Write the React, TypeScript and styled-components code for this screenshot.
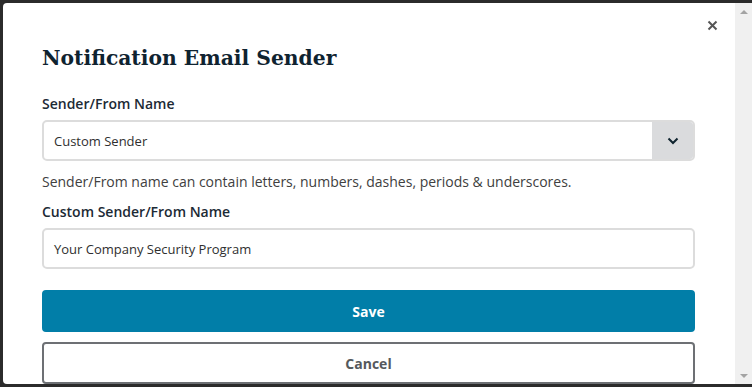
import styled, { createGlobalStyle } from 'styled-components';

const GlobalStyle = createGlobalStyle`
  html, body {
    margin: 0;
    padding: 0;
    background: #2b2b2b;
  }
  * {
    box-sizing: border-box;
  }
`;

const Backdrop = styled.div`
  width: 752px;
  height: 387px;
  padding: 3px 0 3px 3px;
  display: flex;
  background: #2b2b2b;
  overflow: hidden;
`;

const Modal = styled.div`
  position: relative;
  flex: 1;
  display: flex;
  background: #ffffff;
  border-radius: 4px 0 0 4px;
  overflow: hidden;
  font-family: 'Open Sans', 'Noto Sans', sans-serif;
`;

const Content = styled.div`
  flex: 1;
  padding: 40px 40px 0 39px;
  display: flex;
  flex-direction: column;
`;

const CloseButton = styled.button`
  position: absolute;
  top: 14px;
  right: 32px;
  border: none;
  background: none;
  padding: 0;
  width: 16px;
  height: 16px;
  display: flex;
  align-items: center;
  justify-content: center;
  cursor: pointer;
`;

const Title = styled.h2`
  margin: 0 0 22px;
  font-family: 'DejaVu Serif', 'Liberation Serif', serif;
  font-weight: 700;
  font-size: 20.3px;
  line-height: 30px;
  color: #0f2330;
`;

const Label = styled.label`
  display: block;
  font-size: 14px;
  font-weight: 600;
  line-height: 18px;
  color: #1c2a35;
  margin-bottom: 7px;
`;

const SelectBox = styled.div`
  display: flex;
  height: 42px;
  border: 2px solid #dcdcdc;
  border-radius: 5px;
  overflow: hidden;
`;

const SelectValue = styled.div`
  flex: 1;
  display: flex;
  align-items: center;
  padding-left: 10px;
  font-size: 13px;
  color: #2f2f2f;
`;

const Chevron = styled.div`
  width: 41px;
  display: flex;
  align-items: center;
  justify-content: center;
  background: #dadbdd;
`;

const Help = styled.p`
  margin: 11px 0 11px;
  font-size: 14px;
  line-height: 20px;
  color: #404040;
`;

const TextInput = styled.div`
  height: 42px;
  display: flex;
  align-items: center;
  padding-left: 10px;
  border: 2px solid #dcdcdc;
  border-radius: 5px;
  font-size: 13px;
  color: #2f2f2f;
`;

const Button = styled.button<{ $primary?: boolean }>`
  height: 42px;
  width: 100%;
  flex-shrink: 0;
  border-radius: 4px;
  font-family: 'Open Sans', 'Noto Sans', sans-serif;
  font-size: 14px;
  font-weight: 700;
  cursor: pointer;
  background: ${(p) => (p.$primary ? '#017ea8' : '#ffffff')};
  color: ${(p) => (p.$primary ? '#ffffff' : '#55595d')};
  border: 2px solid ${(p) => (p.$primary ? '#017ea8' : '#6d7074')};
  margin-top: ${(p) => (p.$primary ? '21px' : '10px')};
`;

const Scrollbar = styled.div`
  width: 17px;
  background: #f0f0f0;
  display: flex;
  flex-direction: column;
  justify-content: space-between;
  align-items: center;
  padding: 7px 0 6px;
`;

const Arrow = styled.div<{ $down?: boolean }>`
  width: 0;
  height: 0;
  border-left: 4px solid transparent;
  border-right: 4px solid transparent;
  ${(p) =>
    p.$down
      ? 'border-top: 4px solid #a3a3a3;'
      : 'border-bottom: 4px solid #a3a3a3;'}
`;

export default function App() {
  return (
    <>
      <GlobalStyle />
      <Backdrop>
        <Modal>
          <CloseButton aria-label='Close'>
            <svg width='11' height='11' viewBox='0 0 11 11'>
              <path d='M1.5 1.5 L9.5 9.5 M9.5 1.5 L1.5 9.5' stroke='#555' strokeWidth='2' />
            </svg>
          </CloseButton>
          <Content>
            <Title>Notification Email Sender</Title>
            <Label>Sender/From Name</Label>
            <SelectBox>
              <SelectValue>Custom Sender</SelectValue>
              <Chevron>
                <svg width='12' height='8' viewBox='0 0 12 8'>
                  <path d='M1.5 1.5 L6 6 L10.5 1.5' fill='none' stroke='#10242f' strokeWidth='2' />
                </svg>
              </Chevron>
            </SelectBox>
            <Help>Sender/From name can contain letters, numbers, dashes, periods &amp; underscores.</Help>
            <Label>Custom Sender/From Name</Label>
            <TextInput>Your Company Security Program</TextInput>
            <Button $primary>Save</Button>
            <Button>Cancel</Button>
          </Content>
          <Scrollbar>
            <Arrow />
            <Arrow $down />
          </Scrollbar>
        </Modal>
      </Backdrop>
    </>
  );
}
